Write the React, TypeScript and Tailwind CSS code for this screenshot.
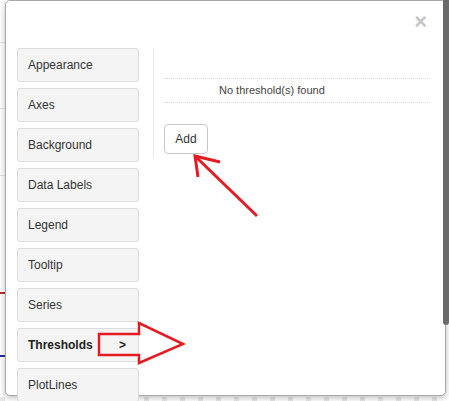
import React from 'react'

const tabs = ['Appearance', 'Axes', 'Background', 'Data Labels', 'Legend', 'Tooltip', 'Series', 'Thresholds', 'PlotLines']

export default function App() {
  return (
    <div className="relative h-[401px] w-[449px] overflow-hidden bg-white font-['Liberation_Sans',Arial,sans-serif] text-[12px] text-[#333]">
      {/* chart page behind the modal */}
      <div className="absolute inset-0">
        <div className="h-full w-[6px] bg-[linear-gradient(180deg,transparent_42px,#e2e2e2_42px,#e2e2e2_43px,transparent_43px,transparent_108px,#e2e2e2_108px,#e2e2e2_109px,transparent_109px,transparent_175px,#e2e2e2_175px,#e2e2e2_176px,transparent_176px,transparent_292px,#b03030_292px,#b03030_294px,transparent_294px,transparent_355px,#2030a0_355px,#2030a0_357px,transparent_357px)]" />
        <div className="absolute bottom-0 left-0 h-[4px] w-full bg-[repeating-linear-gradient(90deg,#cfcfcf_0_5px,transparent_5px_18px)] opacity-50" />
      </div>

      {/* modal */}
      <div className="absolute left-[5px] top-0 h-[396px] w-[441px] rounded-[5px] border border-[#a8a8a8] bg-white shadow-[0_2px_6px_rgba(0,0,0,0.25)]">
        <button className="absolute right-[18px] top-[10px] text-[22px] font-bold leading-none text-[#c6c6c6]">×</button>
        <div className="flex pl-[11px] pt-[47px]">
          <div className="flex w-[122px] flex-col gap-[6px]">
            {tabs.map((t) => (
              <div
                key={t}
                className={`flex h-[34px] shrink-0 items-center rounded-[3px] border border-[#dcdcdc] bg-[#f4f4f4] pl-[10px] ${t === 'Thresholds' ? 'font-bold text-[#222]' : ''}`}
              >
                <span>{t}</span>
                {t === 'Thresholds' && <span className="ml-auto mr-[12px]">&gt;</span>}
              </div>
            ))}
          </div>
          <div className="ml-[14px] flex h-[110px] w-[275px] flex-col border-l border-[#eaeaea] pl-[10px]">
            <div className="mt-[30px] w-[264px] border-y border-dotted border-[#d6d6d6]">
              <div className="flex h-[23px] items-center pl-[55px] text-[11px] text-[#444]">No threshold(s) found</div>
            </div>
            <button className="mt-[21px] h-[30px] w-[44px] rounded-[4px] border border-[#c8c8c8] bg-white text-[12px] text-[#333]">Add</button>
          </div>
        </div>
      </div>

      {/* page scrollbar */}
      <div className="absolute right-0 top-0 h-[325px] w-[6px] rounded-b-[3px] bg-[#6a6a6a]" />

      {/* annotations */}
      <svg className="pointer-events-none absolute inset-0" width="449" height="401">
        <path
          d="M99 334 L139 334 L139 323 L183 344 L139 363 L139 355 L99 355 Z"
          fill="none"
          stroke="#e51b24"
          strokeWidth="2.5"
        />
        <path d="M257 216 L195 156" stroke="#e51b24" strokeWidth="3" fill="none" />
        <path d="M220 162 L195 156 L198 177" stroke="#e51b24" strokeWidth="3" fill="none" />
      </svg>
    </div>
  )
}
